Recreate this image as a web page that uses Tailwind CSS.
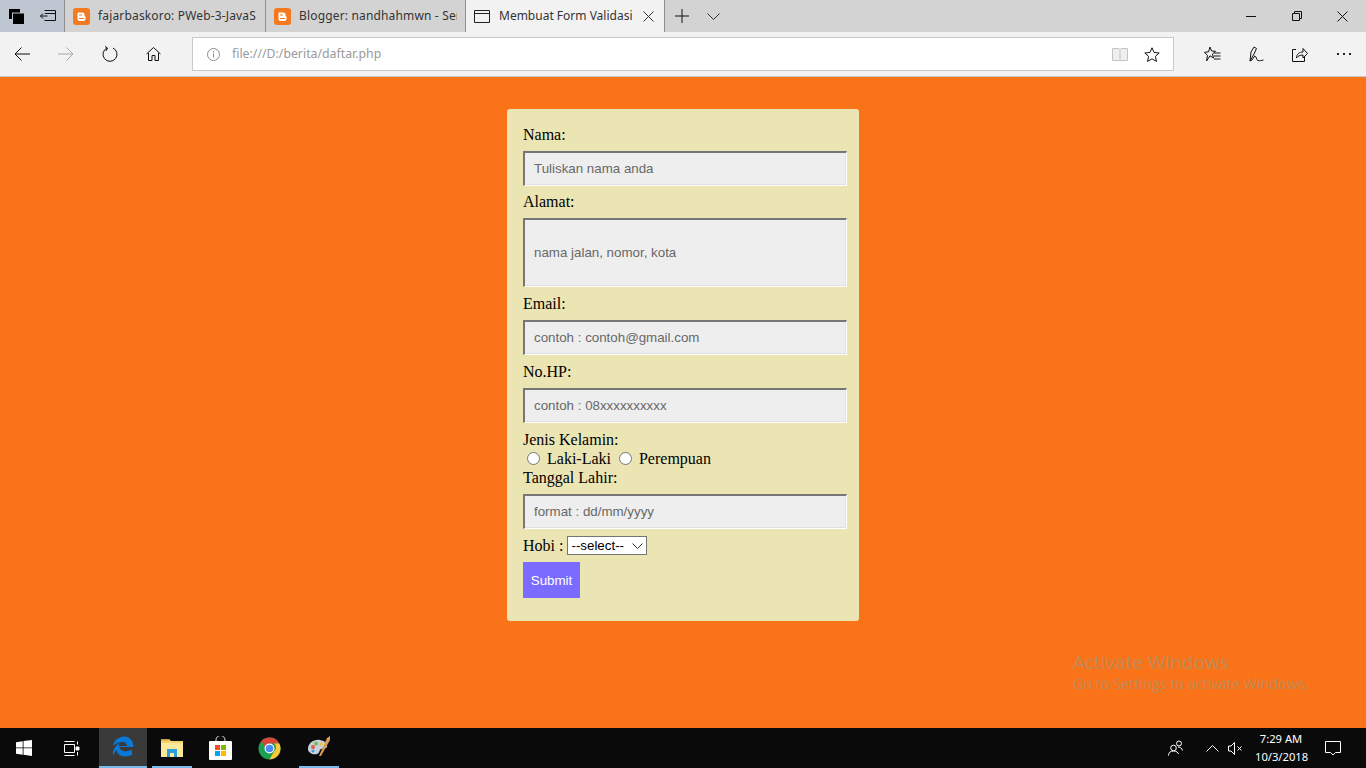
<!DOCTYPE html>
<html>
<head>
<meta charset="utf-8">
<script src="https://cdn.jsdelivr.net/npm/@tailwindcss/browser@4"></script>
</head>
<body class="w-[1366px] h-[768px] overflow-hidden flex flex-col font-['Noto_Sans',sans-serif] bg-[#fb7318]">

<!-- tab strip -->
<div class="h-[32px] flex bg-[#d3d3d3] shrink-0 text-[12px] text-[#333]">
  <div class="w-[64px] flex items-center bg-[#bec7d1]">
    <svg class="ml-[9px] w-[15px] h-[15px]" viewBox="0 0 15 15"><path d="M0 0h11v10H0z" fill="#000"/><path d="M3 3.500h12V15H3z" fill="#bec7d1"/><path d="M4 4.500h11V15H4z" fill="#000"/></svg>
    <svg class="ml-[16px] w-[16px] h-[14px]" viewBox="0 0 16 14" fill="none" stroke="#111"><path d="M4.500 1.500h11v10h-11M5 4.500h10M0.500 7h7M3 4.500L0.500 7L3 9.500"/></svg>
  </div>
  <div class="w-px bg-[#8f8f8f]"></div>
  <div class="w-[200px] flex items-center pl-[8px]">
    <svg class="w-[17px] h-[17px] shrink-0" viewBox="0 0 17 17"><rect width="17" height="17" rx="3" fill="#f5791f"/><path d="M5 4.500h4.500a2 2 0 0 1 2 2v1a1 1 0 0 0 1 1v2.500a2 2 0 0 1-2 2h-4a2 2 0 0 1-2-2v-5a1.500 1.500 0 0 1 .5-1.500z" fill="#fff"/><path d="M6 7h3M6 10.500h5" stroke="#f5791f" stroke-width="1.200"/></svg>
    <span class="ml-[8px] whitespace-nowrap tracking-[0.16px]">fajarbaskoro: PWeb-3-JavaS</span>
  </div>
  <div class="w-px bg-[#8f8f8f]"></div>
  <div class="w-[199px] flex items-center pl-[8px]">
    <svg class="w-[17px] h-[17px] shrink-0" viewBox="0 0 17 17"><rect width="17" height="17" rx="3" fill="#f5791f"/><path d="M5 4.500h4.500a2 2 0 0 1 2 2v1a1 1 0 0 0 1 1v2.500a2 2 0 0 1-2 2h-4a2 2 0 0 1-2-2v-5a1.500 1.500 0 0 1 .5-1.500z" fill="#fff"/><path d="M6 7h3M6 10.500h5" stroke="#f5791f" stroke-width="1.200"/></svg>
    <span class="ml-[8px] w-[158px] overflow-hidden whitespace-nowrap tracking-[0.16px]">Blogger: nandhahmwn - Ser</span>
  </div>
  <div class="w-[200px] flex items-center pl-[8px] bg-[#f2f2f2] border-l border-r border-[#8f8f8f]">
    <svg class="w-[16px] h-[13px] shrink-0" viewBox="0 0 16 13" fill="none" stroke="#222"><path d="M.5.500h15v12H.5zM.5 3.500h15"/></svg>
    <span class="ml-[9px] whitespace-nowrap w-[135px] overflow-hidden">Membuat Form Validasi</span>
    <svg class="ml-[9px] w-[11px] h-[11px]" viewBox="0 0 11 11" stroke="#333" fill="none"><path d="M.5.500l10 10M10.500.500l-10 10"/></svg>
  </div>
  <div class="flex items-center">
    <svg class="ml-[10px] w-[14px] h-[14px]" viewBox="0 0 14 14" stroke="#111" fill="none"><path d="M7 0v14M0 7h14"/></svg>
    <svg class="ml-[18px] w-[13px] h-[7px]" viewBox="0 0 13 7" stroke="#333" fill="none"><path d="M.5.500l6 6 6-6"/></svg>
  </div>
  <div class="ml-auto flex items-center">
    <svg class="w-[10px] h-[11px] mr-[36px]" viewBox="0 0 10 11" stroke="#111" fill="none"><path d="M0 5.500h10"/></svg>
    <svg class="w-[10px] h-[10px] mr-[35px]" viewBox="0 0 10 10" stroke="#111" fill="none"><path d="M.5 2.500h7v7h-7zM2.500 2.500v-2h7v7h-2"/></svg>
    <svg class="w-[11px] h-[11px] mr-[18px]" viewBox="0 0 11 11" stroke="#111" fill="none"><path d="M.5.500l10 10M10.500.500l-10 10"/></svg>
  </div>
</div>

<!-- toolbar -->
<div class="h-[45px] shrink-0 flex items-center bg-[#f2f2f2] border-b border-[#c8c8c8]">
  <svg class="ml-[14px] w-[16px] h-[14px]" viewBox="0 0 16 14" stroke="#111" fill="none"><path d="M16 7H1M7.500.500L1 7l6.500 6.500"/></svg>
  <svg class="ml-[28px] w-[16px] h-[14px]" viewBox="0 0 16 14" stroke="#a8a8a8" fill="none"><path d="M0 7h15M8.500.500L15 7l-6.500 6.500"/></svg>
  <svg class="ml-[28px] w-[16px] h-[16px]" viewBox="0 0 16 16" stroke="#111" fill="none"><path d="M5 2A7 7 0 1 0 11 2M3 .500L5.500 2 4 5"/></svg>
  <svg class="ml-[28px] w-[15px] h-[14px]" viewBox="0 0 15 14" stroke="#111" fill="none"><path d="M.5 7L7.500 .500l7 6.500M2.500 6v7.500h3.500v-5h3v5h3.500V6"/></svg>
  <div class="ml-[31px] w-[982px] h-[34px] bg-white border border-[#c9c9c9] flex items-center text-[12.3px] text-[#9a9a9a]">
    <svg class="ml-[14px] w-[13px] h-[13px]" viewBox="0 0 13 13" stroke="#8a8a8a" fill="none"><circle cx="6.500" cy="6.500" r="6"/><path d="M6.500 5.500v4M6.500 3v1.500"/></svg>
    <span class="ml-[12px]">file:///D:/berita/daftar.php</span>
    <svg class="ml-auto w-[16px] h-[15px]" viewBox="0 0 16 15" stroke="#c4c4c4" fill="#efefef"><path d="M.5 1.500h6.500l1 1 1-1h6.500v12H9l-1 1-1-1H.5zM8 2.500v11"/></svg>
    <svg class="ml-[16px] mr-[13px] w-[16px] h-[15px]" viewBox="0 0 16 15" stroke="#111" fill="none"><path d="M8 .800l2.100 4.700 5.100.5-3.800 3.400 1.100 5L8 11.800l-4.500 2.600 1.100-5L.8 6l5.100-.5z"/></svg>
  </div>
  <svg class="ml-[30px] w-[17px] h-[16px]" viewBox="0 0 17 16" stroke="#111" fill="none"><path d="M6 1l1.500 4 4 .3-3 2.700 1 4-3.500-2.200L2.500 15l1-5.500L.5 6.300l4-.5zM10 7h6.500M10 10h6.500M10 13h6.500"/></svg>
  <svg class="ml-[28px] w-[16px] h-[17px]" viewBox="0 0 16 17" stroke="#111" fill="none"><path d="M1 15L2 6l3-5 2.500 1.500L5 8l-4 7c3 0 3.500-5 5-5s1 4 3 4.500 3 0 5.500-.5"/></svg>
  <svg class="ml-[27px] w-[16px] h-[15px]" viewBox="0 0 16 15" stroke="#111" fill="none"><path d="M4 2.500H.5v12h12V10M4.500 11c0-4 3-6 6.500-6V1.500l4.500 5-4.500 4.500V8C8 8 6 9 4.500 11z"/></svg>
  <span class="ml-[29px] flex gap-[4px]"><i class="w-[2px] h-[2px] bg-[#222]"></i><i class="w-[2px] h-[2px] bg-[#222]"></i><i class="w-[2px] h-[2px] bg-[#222]"></i></span>
</div>

<!-- page -->
<main class="flex-1 relative pt-[32px] font-['Liberation_Serif',serif] text-[16px] leading-[18px] text-black bg-[#fb7318]">
  <form class="w-[352px] h-[512px] mx-auto pl-[16px] pr-[12px] pt-[17px] bg-[#ebe5b4] rounded-[3px]">
    <div>Nama:</div>
    <div class="mt-[7px] h-[35px] flex items-center pl-[9px] pb-[1px] bg-[#eeeeee] border-t-2 border-l-2 border-r border-b border-t-[#767676] border-l-[#767676] border-r-white border-b-white shadow-[inset_-1px_-1px_0_#e0e0e0] font-['Liberation_Sans',sans-serif] text-[13.333px] text-[#686868]">Tuliskan nama anda</div>
    <div class="mt-[7px]">Alamat:</div>
    <div class="mt-[7px] h-[69px] flex items-center pl-[9px] pb-[1px] bg-[#eeeeee] border-t-2 border-l-2 border-r border-b border-t-[#767676] border-l-[#767676] border-r-white border-b-white shadow-[inset_-1px_-1px_0_#e0e0e0] font-['Liberation_Sans',sans-serif] text-[13.333px] text-[#686868]">nama jalan, nomor, kota</div>
    <div class="mt-[8px]">Email:</div>
    <div class="mt-[7px] h-[35px] flex items-center pl-[9px] pb-[1px] bg-[#eeeeee] border-t-2 border-l-2 border-r border-b border-t-[#767676] border-l-[#767676] border-r-white border-b-white shadow-[inset_-1px_-1px_0_#e0e0e0] font-['Liberation_Sans',sans-serif] text-[13.333px] text-[#686868]">contoh : contoh@gmail.com</div>
    <div class="mt-[8px]">No.HP:</div>
    <div class="mt-[7px] h-[35px] flex items-center pl-[9px] pb-[1px] bg-[#eeeeee] border-t-2 border-l-2 border-r border-b border-t-[#767676] border-l-[#767676] border-r-white border-b-white shadow-[inset_-1px_-1px_0_#e0e0e0] font-['Liberation_Sans',sans-serif] text-[13.333px] text-[#686868]">contoh : 08xxxxxxxxxx</div>
    <div class="mt-[8px]">Jenis Kelamin:</div>
    <div class="h-[20px] flex items-center">
      <span class="ml-[4px] -mt-[2px] w-[13px] h-[13px] rounded-full bg-white border border-[#767676]"></span>
      <span class="ml-[7px]">Laki-Laki</span>
      <span class="ml-[8px] -mt-[2px] w-[13px] h-[13px] rounded-full bg-white border border-[#767676]"></span>
      <span class="ml-[7px]">Perempuan</span>
    </div>
    <div>Tanggal Lahir:</div>
    <div class="mt-[7px] h-[35px] flex items-center pl-[9px] pb-[1px] bg-[#eeeeee] border-t-2 border-l-2 border-r border-b border-t-[#767676] border-l-[#767676] border-r-white border-b-white shadow-[inset_-1px_-1px_0_#e0e0e0] font-['Liberation_Sans',sans-serif] text-[13.333px] text-[#686868]">format : dd/mm/yyyy</div>
    <div class="mt-[7px] h-[19px] flex items-center">
      <span>Hobi :</span>
      <span class="ml-[4px] w-[80px] h-[19px] flex items-center bg-white border border-[#767676] pl-[3px] font-['Liberation_Sans',sans-serif] text-[13.333px]">--select--<svg class="ml-auto mr-[3px] w-[11px] h-[6px]" viewBox="0 0 11 6" stroke="#333" fill="none"><path d="M.5.500l5 5 5-5"/></svg></span>
    </div>
    <div class="mt-[7px] w-[57px] h-[36px] pt-[1px] flex items-center justify-center bg-[#7a6cff] text-white font-['Liberation_Sans',sans-serif] text-[13.333px]">Submit</div>
  </form>
  <div class="absolute left-[1073px] top-[573px] text-[#bd8b5b] font-['Open_Sans',sans-serif] text-[19px] leading-[24px] whitespace-nowrap">Activate Windows</div>
  <div class="absolute left-[1073px] top-[598px] text-[#bd8b5b] font-['Open_Sans',sans-serif] text-[14.400px] leading-[18px] whitespace-nowrap">Go to Settings to activate Windows.</div>
</main>

<!-- taskbar -->
<footer class="h-[40px] shrink-0 flex bg-[#0a0a0b] text-white">
  <div class="w-[48px] flex items-center justify-center">
    <svg class="w-[16px] h-[16px]" viewBox="0 0 16 16" fill="#fff"><path d="M0 2.200l6.700-1v6.300H0zM7.500 1l8.500-1v7.500H7.500zM0 8.300h6.700v6.500l-6.700-1zM7.500 8.300H16V16l-8.500-1.200z"/></svg>
  </div>
  <div class="w-[51px] flex items-center pl-[16px]">
    <svg class="w-[16px] h-[15px]" viewBox="0 0 16 15" stroke="#fff" fill="none"><path d="M.5 3.500h10v8H.5zM.5 .500h10M.5 14.500h10M13.500 .500v3M13.500 11v3.500"/><path d="M12 6h3v3h-3z" fill="#fff"/></svg>
  </div>
  <div class="w-[48px] flex items-center justify-center bg-[#3a3a3a] border-b-[2px] border-[#76b9ed]">
    <svg class="w-[22px] h-[22px]" viewBox="0 0 22 22" fill="none"><path d="M1 10C2 4 7 .500 12 .500c6 0 9.500 4.500 9.500 10.500H7.500c.3 4 6.500 6 12.500 2.500v5.500C13 22 5 20 4.500 14 3 16 2 17.500 1 20c-.5-3 0-7 3-10 2-2 3-3 4-3.500-1 1.500-1.500 2.500-1 3.500h8c0-5-8-5.500-14 0z" fill="#0a78d6"/></svg>
  </div>
  <div class="ml-[5px] w-[40px] flex items-center justify-center border-b-[2px] border-[#76b9ed]">
    <svg class="w-[22px] h-[19px]" viewBox="0 0 22 19"><path d="M0 1h8l2 2h12v16H0z" fill="#f6d36a"/><path d="M0 5h22v14H0z" fill="#fbe79b"/><path d="M6 11h10v8h-3v-4H9v4H6z" fill="#28a0e0"/><path d="M0 1h8v1.500H0z" fill="#c79d3a"/></svg>
  </div>
  <div class="ml-[8px] w-[40px] flex items-center justify-center">
    <svg class="w-[23px] h-[24px]" viewBox="0 0 23 24"><path d="M7 7V4a4.500 4.500 0 0 1 9 0v3" stroke="#ddd" fill="none"/><rect y="5" width="23" height="19" rx="1" fill="#fff"/><path d="M6 9h5v5H6z" fill="#f25022"/><path d="M12 9h5v5h-5z" fill="#7fba00"/><path d="M6 15h5v5H6z" fill="#00a4ef"/><path d="M12 15h5v5h-5z" fill="#ffb900"/></svg>
  </div>
  <div class="ml-[9px] w-[40px] flex items-center justify-center">
    <svg class="w-[23px] h-[23px]" viewBox="0 0 24 24"><circle cx="12" cy="12" r="11.500" fill="#1e9e52"/><path d="M12 .500a11.500 11.500 0 0 1 10.200 6.200H12a5.300 5.300 0 0 0-5 3.500L3.500 4.300A11.500 11.500 0 0 1 12 .500z" fill="#dc4437"/><path d="M22.200 6.700A11.500 11.500 0 0 1 12 23.500l4.700-8.300a5.300 5.300 0 0 0 0-8.500z" fill="#fcc934"/><circle cx="12" cy="12" r="5.200" fill="#fff"/><circle cx="12" cy="12" r="4" fill="#4a8af4"/></svg>
  </div>
  <div class="ml-[10px] w-[40px] flex items-center justify-center border-b-[2px] border-[#76b9ed]">
    <svg class="w-[24px] h-[24px]" viewBox="0 0 24 24"><path d="M1 14C1 8 7 4 13 5c5 1 8 4 7 7-1 2-4 1-6 2s-1 4-4 5c-4 1-9-1-9-5z" fill="#c6d3de"/><circle cx="6" cy="12" r="2" fill="#e25b4a"/><circle cx="9" cy="8.500" r="2" fill="#6fbf4a"/><circle cx="14" cy="9" r="1.800" fill="#f0c040"/><circle cx="6" cy="16" r="1.600" fill="#4b9be0"/><path d="M12 21L20 3l3-2v4L14 21z" fill="#d99a55"/></svg>
  </div>
  <div class="ml-auto flex items-center">
    <svg class="w-[15px] h-[16px]" viewBox="0 0 15 16" stroke="#fff" fill="none"><circle cx="5.500" cy="8" r="2.800"/><path d="M.5 15.500c0-3 2-4.500 5-4.500s4.500 1.500 5 3"/><circle cx="11" cy="3.500" r="2.500"/><path d="M10 7c2 0 4 1 4.500 3.500"/></svg>
    <svg class="ml-[23px] w-[13px] h-[7px]" viewBox="0 0 13 7" stroke="#fff" fill="none"><path d="M.5 6.500l6-6 6 6"/></svg>
    <svg class="ml-[9px] w-[15px] h-[13px]" viewBox="0 0 15 13" stroke="#fff" fill="none"><path d="M.5 4h2.500L6.500.500v12L3 9H.5zM9.500 4.500l4 4M13.500 4.500l-4 4"/></svg>
    <div class="ml-[12px] w-[52px] text-center font-['Noto_Sans',sans-serif] text-[11.200px] leading-[18px]">
      <div>7:29 AM</div>
      <div>10/3/2018</div>
    </div>
    <svg class="ml-[18px] mr-[25px] w-[16px] h-[15px]" viewBox="0 0 16 15" stroke="#fff" fill="none"><path d="M.5.500h15v11h-5L8 14l-2.500-2.500h-5z"/></svg>
  </div>
</footer>
</body>
</html>
